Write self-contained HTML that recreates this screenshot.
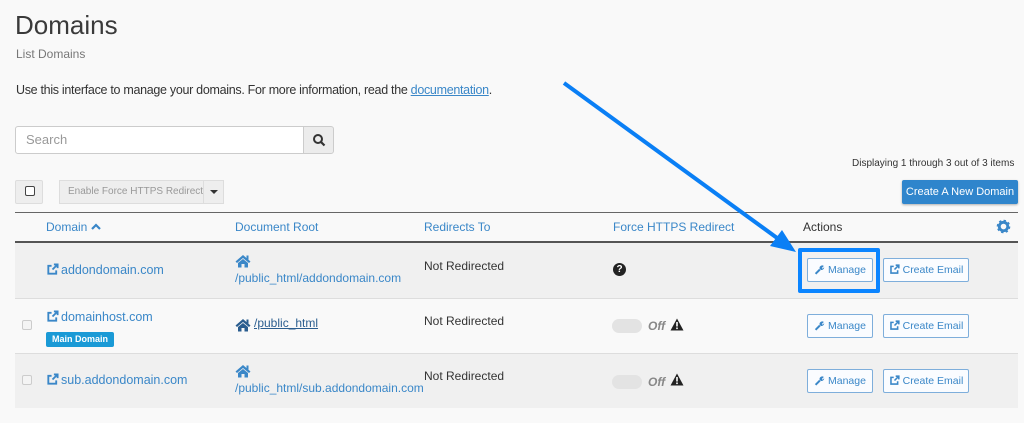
<!DOCTYPE html>
<html><head><meta charset="utf-8"><style>
*{box-sizing:border-box;margin:0;padding:0}
body{width:1024px;height:423px;background:#f9f9f9;font-family:"Liberation Sans",sans-serif;position:relative;overflow:hidden;color:#333}
.a{position:absolute;white-space:nowrap}
.lnk{color:#3a87c8}
.btn{position:absolute;border:1px solid #7eaedb;border-radius:2px;background:#fafcff;color:#3a87c8;font-size:10.5px;height:24px;line-height:22px;text-align:center}
.btn svg{vertical-align:-2px}
.row{position:absolute;left:15px;width:1003px;height:55px}
.cb{position:absolute;width:10px;height:10px;border:1px solid #ccc;border-radius:2px;background:#f4f4f4}
.tog{position:absolute;width:30px;height:14px;border-radius:7px;background:#e3e3e3}
.off{position:absolute;font-style:italic;font-weight:bold;color:#888;font-size:12px}
.ext{vertical-align:-2px;margin-right:2px}
</style></head><body>
<svg width="0" height="0" style="position:absolute"><defs>
<symbol id="ext" viewBox="0 0 14 14"><path d="M6 3H2.5v8.5H11V8" fill="none" stroke="currentColor" stroke-width="2"/><path d="M7 7L12 2M8.5 1.5H12.5V5.5" fill="none" stroke="currentColor" stroke-width="2"/></symbol>
<symbol id="home" viewBox="0 0 16 14"><path d="M8 1L0.5 7.5 2 9 8 4 14 9 15.5 7.5Z" fill="currentColor"/><path d="M3 9V13.5H6.5V10H9.5V13.5H13V9L8 5Z" fill="currentColor"/><rect x="11.5" y="1.5" width="2" height="4" fill="currentColor"/></symbol>
<symbol id="wr" viewBox="0 0 14 14"><path d="M2 12.5L7.5 7" stroke="currentColor" stroke-width="2.5" fill="none"/><path d="M7 5.5A3.5 3.5 0 0 1 12.5 2.5L10 5 11 6 13 4A3.5 3.5 0 0 1 8.5 7.5Z" fill="currentColor"/></symbol>
</defs></svg>
<div class="a" style="left:15px;top:10px;font-size:26px;color:#3a3a3a">Domains</div>
<div class="a" style="left:16px;top:47px;font-size:12px;color:#777">List Domains</div>
<div class="a" style="left:16px;top:83px;font-size:12.5px;color:#333;letter-spacing:-0.3px">Use this interface to manage your domains. For more information, read the <span class="lnk" style="text-decoration:underline">documentation</span>.</div>
<div class="a" style="left:15px;top:126px;width:289px;height:28px;background:#fff;border:1px solid #ccc;border-radius:3px 0 0 3px;font-size:13px;color:#999;padding:5px 10px">Search</div>
<div class="a" style="left:303px;top:126px;width:31px;height:28px;background:#ececec;border:1px solid #ccc;border-radius:0 3px 3px 0"><svg width="14" height="14" style="position:absolute;left:8px;top:6px" viewBox="0 0 14 14"><circle cx="6" cy="6" r="4" fill="none" stroke="#333" stroke-width="2"/><line x1="9" y1="9" x2="12.5" y2="12.5" stroke="#333" stroke-width="2.2"/></svg></div>
<div class="a" style="left:852px;top:158px;font-size:10px;color:#333">Displaying 1 through 3 out of 3 items</div>
<div class="a" style="left:15px;top:180px;width:28px;height:24px;background:#eee;border:1px solid #ddd;border-radius:2px"><div style="position:absolute;left:9px;top:5px;width:10px;height:10px;border:1px solid #444;border-radius:2px;background:#fff"></div></div>
<div class="a" style="left:59px;top:180px;width:145px;height:24px;background:#eee;border:1px solid #ddd;font-size:10px;color:#999;line-height:22px;padding-left:8px">Enable Force HTTPS Redirect</div>
<div class="a" style="left:203px;top:180px;width:21px;height:24px;background:#eee;border:1px solid #ddd"><div style="position:absolute;left:6px;top:9px;border-left:4px solid transparent;border-right:4px solid transparent;border-top:4px solid #333"></div></div>
<div class="a" style="left:902px;top:180px;width:116px;height:24px;background:#2f85cc;border-radius:2px;color:#fff;font-size:11px;line-height:24px;text-align:center;box-shadow:0 1px 2px rgba(0,0,0,.3)">Create A New Domain</div>
<div class="a" style="left:15px;top:212px;width:1003px;height:1px;background:#666"></div>
<div class="a lnk" style="left:46px;top:220px;font-size:12px">Domain <svg width="10" height="8" viewBox="0 0 10 8"><path d="M1 6L5 2 9 6" fill="none" stroke="#3a87c8" stroke-width="2.2"/></svg></div>
<div class="a lnk" style="left:235px;top:220px;font-size:12px">Document Root</div>
<div class="a lnk" style="left:424px;top:220px;font-size:12px">Redirects To</div>
<div class="a lnk" style="left:613px;top:220px;font-size:12px">Force HTTPS Redirect</div>
<div class="a" style="left:803px;top:220px;font-size:12px;color:#333">Actions</div>
<svg class="a" style="left:996px;top:219px" width="15" height="15" viewBox="0 0 16 16"><circle cx="8" cy="8" r="5.5" fill="none" stroke="#3a87c8" stroke-width="3.5" stroke-dasharray="2.2 2.1"/><circle cx="8" cy="8" r="4.5" fill="none" stroke="#3a87c8" stroke-width="3"/><circle cx="8" cy="8" r="1.8" fill="#f9f9f9"/></svg>
<div class="a" style="left:15px;top:241px;width:1003px;height:2px;background:#555"></div>
<div class="row" style="top:243px;background:#f0f0f0"></div>
<div class="row" style="top:298px;background:#f9f9f9;border-top:1px solid #ddd"></div>
<div class="row" style="top:353px;background:#f0f0f0;border-top:1px solid #ddd"></div>
<!-- row1 -->
<div class="a lnk" style="left:46px;top:263px;font-size:12.5px"><svg class="ext" width="13" height="13"><use href="#ext"/></svg>addondomain.com</div>
<svg class="a lnk" style="left:235px;top:254px" width="16" height="14"><use href="#home"/></svg>
<div class="a lnk" style="left:235px;top:271px;font-size:12px">/public_html/addondomain.com</div>
<div class="a" style="left:424px;top:259px;font-size:12px">Not Redirected</div>
<div class="a" style="left:613px;top:263px;width:13px;height:13px;border-radius:50%;background:#222;color:#fff;font-size:10px;font-weight:bold;text-align:center;line-height:13px">?</div>
<div class="btn" style="left:807px;top:258px;width:66px"><svg width="11" height="11" style="color:#3a87c8"><use href="#wr"/></svg> Manage</div>
<div class="btn" style="left:883px;top:258px;width:86px"><svg width="11" height="11"><use href="#ext"/></svg> Create Email</div>
<!-- row2 -->
<div class="cb" style="left:22px;top:320px"></div>
<div class="a lnk" style="left:46px;top:310px;font-size:12.5px"><svg class="ext" width="13" height="13"><use href="#ext"/></svg>domainhost.com</div>
<div class="a" style="left:46px;top:332px;width:68px;height:15px;background:#1a9ad6;border-radius:2px;color:#fff;font-size:9px;font-weight:bold;line-height:15px;text-align:center">Main Domain</div>
<svg class="a" style="left:235px;top:318px;color:#2a5d8f" width="16" height="14"><use href="#home"/></svg>
<div class="a" style="left:254px;top:316px;font-size:12px;color:#2a5d8f;text-decoration:underline">/public_html</div>
<div class="a" style="left:424px;top:314px;font-size:12px">Not Redirected</div>
<div class="tog" style="left:612px;top:319px"></div><div class="off" style="left:648px;top:319px">Off</div>
<svg class="a" style="left:670px;top:318px" width="14" height="13" viewBox="0 0 14 13"><path d="M7 0.5L13.5 12.5H0.5Z" fill="#222"/><rect x="6.2" y="4" width="1.6" height="4.5" fill="#fff"/><rect x="6.2" y="9.5" width="1.6" height="1.6" fill="#fff"/></svg>
<div class="btn" style="left:807px;top:314px;width:66px"><svg width="11" height="11" style="color:#3a87c8"><use href="#wr"/></svg> Manage</div>
<div class="btn" style="left:883px;top:314px;width:86px"><svg width="11" height="11"><use href="#ext"/></svg> Create Email</div>
<!-- row3 -->
<div class="cb" style="left:22px;top:375px"></div>
<div class="a lnk" style="left:46px;top:373px;font-size:12.5px"><svg class="ext" width="13" height="13"><use href="#ext"/></svg>sub.addondomain.com</div>
<svg class="a lnk" style="left:235px;top:364px" width="16" height="14"><use href="#home"/></svg>
<div class="a lnk" style="left:235px;top:381px;font-size:12px">/public_html/sub.addondomain.com</div>
<div class="a" style="left:424px;top:369px;font-size:12px">Not Redirected</div>
<div class="tog" style="left:612px;top:375px"></div><div class="off" style="left:648px;top:375px">Off</div>
<svg class="a" style="left:670px;top:373px" width="14" height="13" viewBox="0 0 14 13"><path d="M7 0.5L13.5 12.5H0.5Z" fill="#222"/><rect x="6.2" y="4" width="1.6" height="4.5" fill="#fff"/><rect x="6.2" y="9.5" width="1.6" height="1.6" fill="#fff"/></svg>
<div class="btn" style="left:807px;top:369px;width:66px"><svg width="11" height="11" style="color:#3a87c8"><use href="#wr"/></svg> Manage</div>
<div class="btn" style="left:883px;top:369px;width:86px"><svg width="11" height="11"><use href="#ext"/></svg> Create Email</div>
<!-- highlight + arrow -->
<div class="a" style="left:798px;top:248px;width:82px;height:45px;border:4px solid #0a84ff;border-radius:2px"></div>
<svg class="a" style="left:0;top:0" width="1024" height="423"><line x1="564" y1="83" x2="784" y2="243" stroke="#0a7ff5" stroke-width="4"/><polygon points="796,252 770,246 782,230" fill="#0a7ff5"/></svg>
</body></html>
